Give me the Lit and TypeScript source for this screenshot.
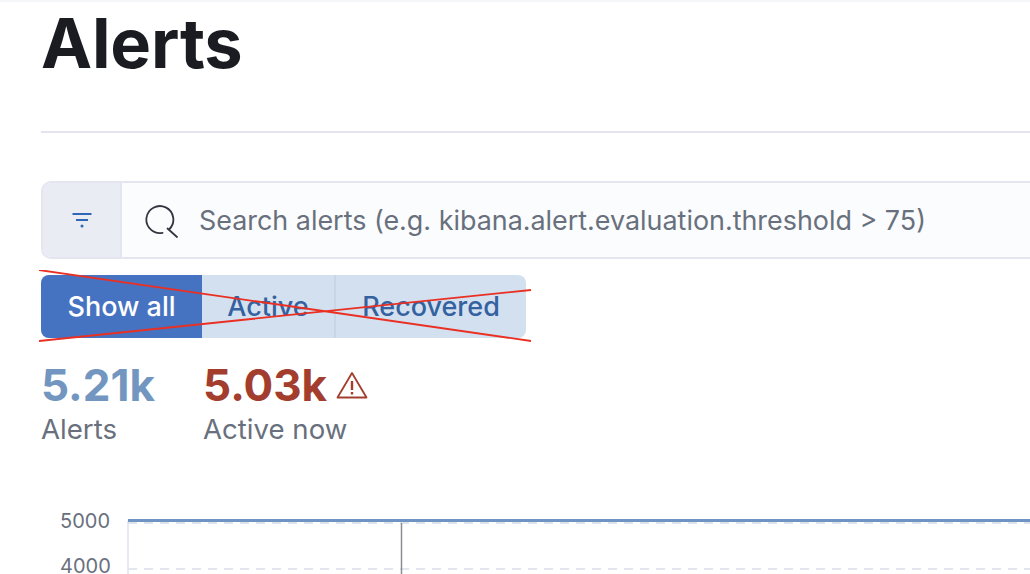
import { LitElement, html, css } from "lit";
import { customElement } from "lit/decorators.js";

@customElement("app-root")
export class AppRoot extends LitElement {
  static styles = css`
    :host { display: block; width: 1030px; height: 574px; overflow: hidden; background: #fff; font-family: Inter, "Liberation Sans", sans-serif; }
    .strip { height: 2px; background: #f5f6f8; }
    .page { padding-left: 41px; display: flex; flex-direction: column; }
    h1 { margin: 0; height: 85px; font-size: 68.5px; line-height: 84px; font-weight: 700; color: #1a1c21; letter-spacing: -0.2px; }
    .rule { margin-top: 44px; height: 2px; background: #e3e4ee; }
    .search { margin-top: 48px; height: 78px; display: flex; box-sizing: border-box; border: 2px solid #e3e6ef; border-right: 0; border-radius: 10px 0 0 10px; background: #fbfcfd; }
    .filter { width: 77px; background: #e9edf3; border-right: 2px solid #e3e6ef; border-radius: 8px 0 0 8px; display: flex; align-items: center; justify-content: center; }
    .field { flex: 1; display: flex; align-items: center; padding-left: 23px; gap: 20px; color: #69707d; font-size: 26.900px; white-space: nowrap; }
    .seg-wrap { position: relative; margin-top: 16px; width: 485px; height: 63px; }
    .seg { display: flex; height: 100%; border-radius: 8px; overflow: hidden; background: #d3e0f0; font-size: 27px; font-weight: 500; }
    .seg div { display: flex; align-items: center; justify-content: center; color: #34619f; }
    .seg .on { width: 161px; background: #4673c1; color: #fff; }
    .seg .mid { width: 132px; border-right: 2px solid #c8d6e6; }
    .seg .last { flex: 1; }
    .cross { position: absolute; left: -2px; top: -5px; }
    .stats { display: flex; gap: 48px; margin-top: 21px; }
    .num { font-size: 44px; line-height: 52px; font-weight: 700; display: flex; align-items: center; gap: 9px; }
    .blue { color: #7396c1; }
    .red { color: #a33d2e; }
    .lab { font-size: 27.600px; line-height: 34px; color: #69707d; margin-top: 1px; }
    .chart { display: block; margin: 60px 0 0 -41px; }
    .chart text { font-family: Inter, "Liberation Sans", sans-serif; font-size: 20px; fill: #69707d; }
  `;

  render() {
    return html`
      <div class="strip"></div>
      <div class="page">
        <h1>Alerts</h1>
        <div class="rule"></div>
        <div class="search">
          <div class="filter">
            <svg width="20" height="16" viewBox="0 0 20 16" fill="none" stroke="#2f66b5" stroke-width="2">
              <path d="M0.5 2H19.5M4 8H16"/>
              <circle cx="10" cy="14" r="1.5" fill="#2f66b5" stroke="none"/>
            </svg>
          </div>
          <div class="field">
            <svg width="34" height="36" viewBox="0 0 34 36" fill="none" stroke="#343741" stroke-width="1.8" stroke-linecap="round">
              <path d="M17.500 30.800A13.500 13.500 0 1 1 24.500 27M22.500 26.500L32 35"/>
            </svg>
            <span>Search alerts (e.g. kibana.alert.evaluation.threshold &gt; 75)</span>
          </div>
        </div>
        <div class="seg-wrap">
          <div class="seg">
            <div class="on">Show all</div>
            <div class="mid">Active</div>
            <div class="last">Recovered</div>
          </div>
          <svg class="cross" width="494" height="73" viewBox="0 0 494 73" fill="none" stroke="#ea2f23" stroke-width="1.8">
            <path d="M0 0L492 71M0 71L492 20"/>
          </svg>
        </div>
        <div class="stats">
          <div>
            <div class="num blue">5.21k</div>
            <div class="lab">Alerts</div>
          </div>
          <div>
            <div class="num red">5.03k
              <svg width="32" height="28" viewBox="0 0 32 28" fill="none" stroke="#a33d2e" stroke-width="1.8" stroke-linejoin="round">
                <path d="M16 2L30.500 26.500H1.500Z"/>
                <path d="M16 10V19M16 21V23.500" stroke-width="2.400"/>
              </svg>
            </div>
            <div class="lab">Active now</div>
          </div>
        </div>
        <svg class="chart" width="1030" height="68" viewBox="0 0 1030 68">
          <text x="60" y="21.500">5000</text>
          <text x="60" y="67">4000</text>
          <path d="M128 15V68" stroke="#e6e9f2" stroke-width="2"/>
          <path d="M128 17H1030" stroke="#dfe3ec" stroke-width="2" stroke-dasharray="9 7"/>
          <path d="M128 63H1030" stroke="#e3e6ee" stroke-width="2" stroke-dasharray="9 7"/>
          <path d="M128 14.500H1030" stroke="#6f93c3" stroke-width="3"/>
          <path d="M401.500 17V68" stroke="#8a8c90" stroke-width="1.500"/>
        </svg>
      </div>
    `;
  }
}
